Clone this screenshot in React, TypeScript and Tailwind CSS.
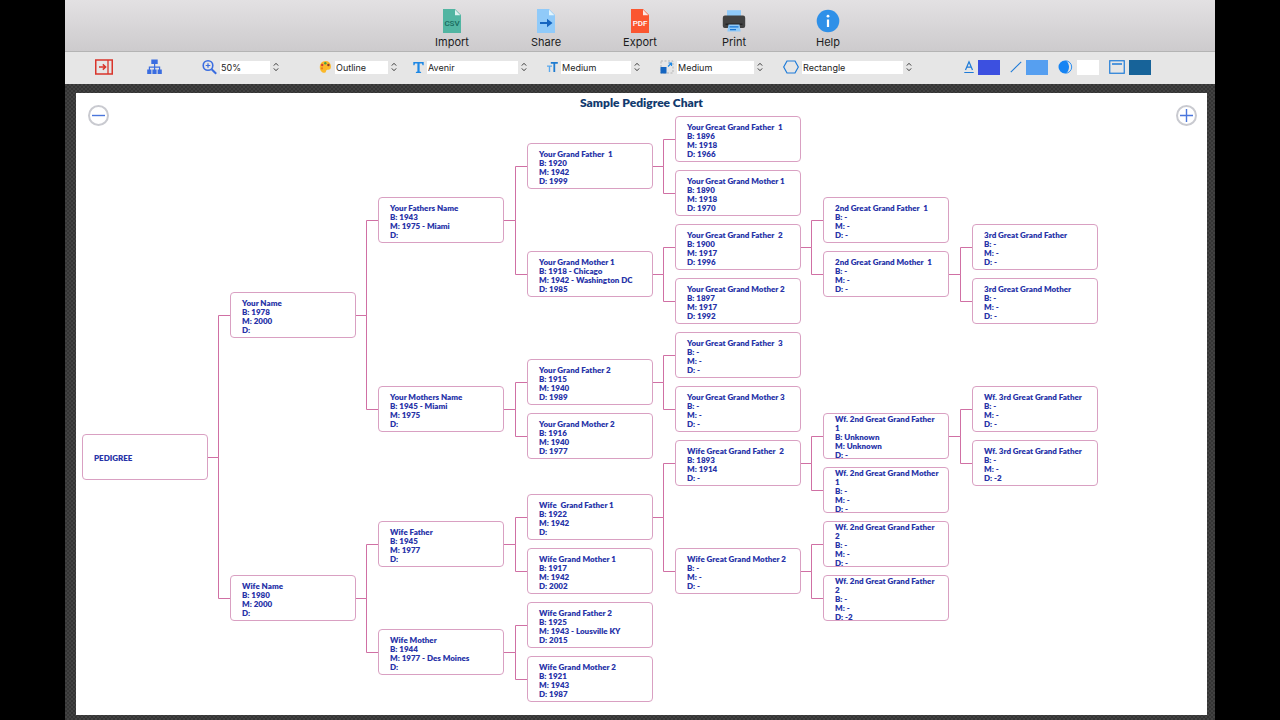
import { useState, type ReactNode } from "react";

// ---------- chart data ----------

type Person = {
  id: string;
  parent?: string;
  col: number;
  top: number;
  lines: string[];
};

// left edge of each generation on the sheet
const COLS = [6, 154, 302, 451, 599, 747, 896];
const NODE_W = 126;

const PEOPLE: Person[] = [
  { id: "root", col: 0, top: 341, lines: ["PEDIGREE"] },

  { id: "y", parent: "root", col: 1, top: 199, lines: ["Your Name", "B: 1978", "M: 2000", "D:"] },
  { id: "w", parent: "root", col: 1, top: 482, lines: ["Wife Name", "B: 1980", "M: 2000", "D:"] },

  { id: "yf", parent: "y", col: 2, top: 104, lines: ["Your Fathers Name", "B: 1943", "M: 1975 - Miami", "D:"] },
  { id: "ym", parent: "y", col: 2, top: 293, lines: ["Your Mothers Name", "B: 1945 - Miami", "M: 1975", "D:"] },
  { id: "wf", parent: "w", col: 2, top: 428, lines: ["Wife Father", "B: 1945", "M: 1977", "D:"] },
  { id: "wm", parent: "w", col: 2, top: 536, lines: ["Wife Mother", "B: 1944", "M: 1977 - Des Moines", "D:"] },

  { id: "gf1", parent: "yf", col: 3, top: 50, lines: ["Your Grand Father  1", "B: 1920", "M: 1942", "D: 1999"] },
  { id: "gm1", parent: "yf", col: 3, top: 158, lines: ["Your Grand Mother 1", "B: 1918 - Chicago", "M: 1942 - Washington DC", "D: 1985"] },
  { id: "gf2", parent: "ym", col: 3, top: 266, lines: ["Your Grand Father 2", "B: 1915", "M: 1940", "D: 1989"] },
  { id: "gm2", parent: "ym", col: 3, top: 320, lines: ["Your Grand Mother 2", "B: 1916", "M: 1940", "D: 1977"] },
  { id: "wgf1", parent: "wf", col: 3, top: 401, lines: ["Wife  Grand Father 1", "B: 1922", "M: 1942", "D:"] },
  { id: "wgm1", parent: "wf", col: 3, top: 455, lines: ["Wife Grand Mother 1", "B: 1917", "M: 1942", "D: 2002"] },
  { id: "wgf2", parent: "wm", col: 3, top: 509, lines: ["Wife Grand Father 2", "B: 1925", "M: 1943 - Lousville KY", "D: 2015"] },
  { id: "wgm2", parent: "wm", col: 3, top: 563, lines: ["Wife Grand Mother 2", "B: 1921", "M: 1943", "D: 1987"] },

  { id: "ggf1", parent: "gf1", col: 4, top: 23, lines: ["Your Great Grand Father  1", "B: 1896", "M: 1918", "D: 1966"] },
  { id: "ggm1", parent: "gf1", col: 4, top: 77, lines: ["Your Great Grand Mother 1", "B: 1890", "M: 1918", "D: 1970"] },
  { id: "ggf2", parent: "gm1", col: 4, top: 131, lines: ["Your Great Grand Father  2", "B: 1900", "M: 1917", "D: 1996"] },
  { id: "ggm2", parent: "gm1", col: 4, top: 185, lines: ["Your Great Grand Mother 2", "B: 1897", "M: 1917", "D: 1992"] },
  { id: "ggf3", parent: "gf2", col: 4, top: 239, lines: ["Your Great Grand Father  3", "B: -", "M: -", "D: -"] },
  { id: "ggm3", parent: "gf2", col: 4, top: 293, lines: ["Your Great Grand Mother 3", "B: -", "M: -", "D: -"] },
  { id: "wggf", parent: "wgf1", col: 4, top: 347, lines: ["Wife Great Grand Father  2", "B: 1893", "M: 1914", "D: -"] },
  { id: "wggm", parent: "wgf1", col: 4, top: 455, lines: ["Wife Great Grand Mother 2", "B: -", "M: -", "D: -"] },

  { id: "2f1", parent: "ggf2", col: 5, top: 104, lines: ["2nd Great Grand Father  1", "B: -", "M: -", "D: -"] },
  { id: "2m1", parent: "ggf2", col: 5, top: 158, lines: ["2nd Great Grand Mother  1", "B: -", "M: -", "D: -"] },
  { id: "w2f1", parent: "wggf", col: 5, top: 320, lines: ["Wf. 2nd Great Grand Father", "1", "B: Unknown", "M: Unknown", "D: -"] },
  { id: "w2m1", parent: "wggf", col: 5, top: 374, lines: ["Wf. 2nd Great Grand Mother", "1", "B: -", "M: -", "D: -"] },
  { id: "w2f2", parent: "wggm", col: 5, top: 428, lines: ["Wf. 2nd Great Grand Father", "2", "B: -", "M: -", "D: -"] },
  { id: "w2m2", parent: "wggm", col: 5, top: 482, lines: ["Wf. 2nd Great Grand Father", "2", "B: -", "M: -", "D: -2"] },

  { id: "3f", parent: "2m1", col: 6, top: 131, lines: ["3rd Great Grand Father", "B: -", "M: -", "D: -"] },
  { id: "3m", parent: "2m1", col: 6, top: 185, lines: ["3rd Great Grand Mother", "B: -", "M: -", "D: -"] },
  { id: "w3f", parent: "w2f1", col: 6, top: 293, lines: ["Wf. 3rd Great Grand Father", "B: -", "M: -", "D: -"] },
  { id: "w3m", parent: "w2f1", col: 6, top: 347, lines: ["Wf. 3rd Great Grand Father", "B: -", "M: -", "D: -2"] },
];

const BY_ID = new Map(PEOPLE.map((p) => [p.id, p]));

// elbow from the parent's right edge to the child's left edge
function elbow(child: Person, parent: Person) {
  const x1 = COLS[parent.col] + NODE_W;
  const x2 = COLS[child.col];
  return `M${x1} ${parent.top + 23.5}H${x2 - 11.5}V${child.top + 23.5}H${x2}`;
}

// ---------- icons ----------

function FileIcon({ fill, fold, children }: { fill: string; fold: string; children: ReactNode }) {
  return (
    <svg width="20" height="24" viewBox="0 0 20 24">
      <path d="M1 0h12l6 6v18H1z" fill={fill} />
      <path d="M13 0.8v5.4h5.4z" fill={fold} />
      {children}
    </svg>
  );
}

function FileTag({ text, fill }: { text: string; fill: string }) {
  return (
    <text x="10" y="17" textAnchor="middle" fontSize="8" fontWeight="500" fill={fill} fontFamily="Roboto, sans-serif">
      {text}
    </text>
  );
}

const csvIcon = (
  <FileIcon fill="#52b5a2" fold="#e0f2f1">
    <FileTag text="CSV" fill="#18695d" />
  </FileIcon>
);

const shareIcon = (
  <FileIcon fill="#90caf9" fold="#e1f5fe">
    <path d="M4 13h7V9.800l5.500 4.200-5.500 4.200V15H4z" fill="#1565c0" />
  </FileIcon>
);

const pdfIcon = (
  <FileIcon fill="#fb5630" fold="#fbe9e7">
    <FileTag text="PDF" fill="#ffffff" />
  </FileIcon>
);

const printIcon = (
  <svg width="24" height="24" viewBox="0 0 24 24">
    <rect x="5" y="1.200" width="14" height="6" fill="#90caf9" />
    <path d="M3 6.500h18a2.200 2.200 0 0 1 2.200 2.200V17a2 2 0 0 1-2 2H2.800a2 2 0 0 1-2-2V8.700A2.200 2.200 0 0 1 3 6.500z" fill="#424242" />
    <path d="M3.500 14.500h17V16h-17z" fill="#242424" />
    <path d="M6.500 15.500h11l1.200 7H5.300z" fill="#90caf9" />
    <path d="M7.500 17.300h9v1.200h-9zM8 20h6v1.200H8z" fill="#1976d2" />
  </svg>
);

const helpIcon = (
  <svg width="24" height="24" viewBox="0 0 24 24">
    <circle cx="12" cy="12" r="11.300" fill="#2f90e8" />
    <rect x="10.900" y="10.500" width="2.200" height="7.500" fill="#fff" />
    <circle cx="12" cy="7.200" r="1.400" fill="#fff" />
  </svg>
);

function PanelIcon() {
  return (
    <svg width="18" height="16" viewBox="0 0 18 16" fill="none" stroke="#d9352b">
      <rect x="0.750" y="1" width="16.500" height="14" strokeWidth="1.500" />
      <path d="M13 1v14" strokeWidth="1.300" />
      <path d="M4 8h6M7.800 5.400L10.600 8l-2.800 2.600" strokeWidth="1.500" />
    </svg>
  );
}

function TreeIcon() {
  return (
    <svg width="15" height="16" viewBox="0 0 15 16" fill="#3a6de0">
      <rect x="4.300" y="0.500" width="6.400" height="4.500" />
      <path d="M7 5h1.200v2.500h5V11h-1.200V8.700H8.200V11H7V8.700H3V11H1.800V7.500H7z" />
      <rect x="0.200" y="10.500" width="4.200" height="4.500" />
      <rect x="5.400" y="10.500" width="4.200" height="4.500" />
      <rect x="10.600" y="10.500" width="4.200" height="4.500" />
    </svg>
  );
}

const zoomIcon = (
  <svg width="15" height="16" viewBox="0 0 15 16" fill="none" stroke="#3a6de0">
    <circle cx="6" cy="6.500" r="4.800" strokeWidth="1.600" />
    <path d="M9.600 10.200l4.600 4.600" strokeWidth="2" />
    <path d="M6 4.200v4.600M3.700 6.500h4.600" strokeWidth="1.200" />
  </svg>
);

const paletteIcon = (
  <svg width="13" height="14" viewBox="0 0 13 14">
    <path d="M6.500 1C3 1 .8 3.800.8 7.200c0 3.300 2.200 5.600 4.600 5.600 1.800 0 1.300-1.600 2-2.600.8-1.100 2.600-.2 3.900-1.300C12.600 7.800 12.400 1 6.500 1z" fill="#fbb829" />
    <circle cx="3.200" cy="5" r="1.200" fill="#d23c3c" />
    <circle cx="6.300" cy="3.200" r="1.200" fill="#43a047" />
    <circle cx="9.400" cy="5" r="1.200" fill="#8e3a30" />
    <circle cx="3" cy="8.400" r="1.100" fill="#e67e22" />
  </svg>
);

const fontIcon = (
  <svg width="11" height="13" viewBox="0 0 11 13" fill="#1e88e5">
    <path d="M.3 1h10.400v3.200H9.500L9 2.600H6.600v8l1.500.4v1H2.900v-1l1.500-.4v-8H2L1.500 4.200H.3z" />
  </svg>
);

const fontSizeIcon = (
  <svg width="11" height="12" viewBox="0 0 11 12">
    <path d="M3.800 1h7v1.700H8.200V11H6.400V2.700H3.800z" fill="#1e7bd0" />
    <path d="M0 4.500h5v1.300H3.200V11H1.800V5.800H0z" fill="#5aa9ee" />
  </svg>
);

const scaleIcon = (
  <svg width="14" height="14" viewBox="0 0 14 14">
    <rect x="1" y="1" width="12" height="12" fill="none" stroke="#b5b5b5" strokeDasharray="2 1.500" />
    <rect x="0.500" y="7" width="6" height="6.500" fill="#1565c0" />
    <path d="M8 6.500l3-3M8.500 3H11.500v3" fill="none" stroke="#1e88e5" strokeWidth="1.200" />
  </svg>
);

const shapeIcon = (
  <svg width="16" height="14" viewBox="0 0 16 14" fill="none" stroke="#1e7bd8" strokeWidth="1.200">
    <path d="M4 1h8l3.300 6L12 13H4L.7 7z" />
  </svg>
);

const textColorIcon = (
  <svg width="10" height="14" viewBox="0 0 10 14" fill="none" stroke="#1e7bd8" strokeWidth="1.200">
    <path d="M1.500 10L5 1.800 8.500 10M2.800 7.200h4.400M.3 12.500h9.400" />
  </svg>
);

const lineColorIcon = (
  <svg width="12" height="12" viewBox="0 0 12 12" stroke="#1e7bd8" strokeWidth="1.100">
    <path d="M.8 11.200L11.200.8" />
  </svg>
);

const fillIcon = (
  <svg width="15" height="14" viewBox="0 0 15 14">
    <path d="M7 .5a6.500 6.500 0 0 0 0 13c1.500 0 4-2.800 4-6.500S8.500.5 7 .5z" fill="#1684f3" />
    <path d="M7.500.8a6.200 6.200 0 0 1 0 12.400" fill="none" stroke="#1684f3" strokeWidth="0.900" />
  </svg>
);

const windowIcon = (
  <svg width="16" height="14" viewBox="0 0 16 14" fill="none" stroke="#1e7bd8">
    <rect x="0.750" y="0.750" width="14.500" height="12.500" strokeWidth="1.200" />
    <path d="M3 4h10" strokeWidth="1.500" />
  </svg>
);

function Stepper() {
  return (
    <svg className="ml-[3px]" width="6" height="10" viewBox="0 0 6 10" fill="none" stroke="#3c3c3c" strokeWidth="1">
      <path d="M.8 3.600L3 1.300l2.200 2.300M.8 6.400L3 8.700l2.200-2.300" />
    </svg>
  );
}

// ---------- toolbar parts ----------

function ActionButton({ icon, label }: { icon: ReactNode; label: string }) {
  return (
    <button type="button" className="flex w-20 flex-col items-center gap-px text-[11px] leading-4 text-[#1c1c1c]">
      {icon}
      {label}
    </button>
  );
}

function Picker({
  label,
  icon,
  options,
  width,
}: {
  label: string;
  icon: ReactNode;
  options: string[];
  width: string;
}) {
  const [value, setValue] = useState(options[0]);
  return (
    <label className="flex items-center">
      {icon}
      <select
        aria-label={label}
        value={value}
        onChange={(e) => setValue(e.target.value)}
        className={`${width} ml-[3px] h-[13px] appearance-none bg-white px-px text-[9px] leading-[13px] text-[#222] outline-none`}
      >
        {options.map((o) => (
          <option key={o}>{o}</option>
        ))}
      </select>
      <Stepper />
    </label>
  );
}

function Swatch({ label, icon, color }: { label: string; icon: ReactNode; color: string }) {
  return (
    <label className="flex items-center gap-1">
      {icon}
      <input
        type="color"
        aria-label={label}
        defaultValue={color}
        className="h-[15px] w-[22px] appearance-none border-0 bg-transparent p-0 [&::-webkit-color-swatch-wrapper]:p-0 [&::-webkit-color-swatch]:rounded-none [&::-webkit-color-swatch]:border-0"
      />
    </label>
  );
}

function ZoomButton({ label, d, side }: { label: string; d: string; side: string }) {
  return (
    <button
      type="button"
      aria-label={label}
      className={`${side} absolute top-3 flex size-[21px] items-center justify-center rounded-full border-2 border-[#c9cad0] bg-white`}
    >
      <svg width="15" height="15" viewBox="0 0 15 15" stroke="#4a76dc" strokeWidth="1.400">
        <path d={d} />
      </svg>
    </button>
  );
}

function PersonCard({ person }: { person: Person }) {
  return (
    <div
      className="absolute flex h-[46px] w-[126px] flex-col justify-center rounded-[4px] border border-[#d9a0c2] bg-white pt-[3px] pl-[11px] text-[8px] leading-[9px] font-extrabold whitespace-pre text-[#2733a8]"
      style={{ left: COLS[person.col], top: person.top }}
    >
      {person.lines.map((line, i) => (
        <p key={i}>{line}</p>
      ))}
    </div>
  );
}

export default function App() {
  return (
    <div className="flex min-h-screen bg-black px-[65px] font-[Inter,'Liberation_Sans',sans-serif]">
      <div className="flex min-w-0 flex-1 flex-col">
        <header className="flex h-[52px] justify-center gap-[14px] border-b border-[#b4b4b4] bg-linear-to-b from-[#e3e1e3] to-[#cdcbcd] pt-[9px]">
          <ActionButton icon={csvIcon} label="Import" />
          <ActionButton icon={shareIcon} label="Share" />
          <ActionButton icon={pdfIcon} label="Export" />
          <ActionButton icon={printIcon} label="Print" />
          <ActionButton icon={helpIcon} label="Help" />
        </header>

        <div className="flex h-8 items-center bg-[#e6e6e6] pr-16 pb-[2px] pl-[30px]">
          <button type="button" aria-label="Toggle panel">
            <PanelIcon />
          </button>
          <button type="button" aria-label="Tree layout" className="mr-10 ml-[34px]">
            <TreeIcon />
          </button>
          <Picker label="Zoom" icon={zoomIcon} options={["50%", "75%", "100%"]} width="w-[50px]" />
          <div className="ml-10 flex items-center gap-4">
            <Picker label="Theme" icon={paletteIcon} options={["Outline", "Filled"]} width="w-[53px]" />
            <Picker label="Font" icon={fontIcon} options={["Avenir", "Helvetica"]} width="w-[91px]" />
          </div>
          <div className="ml-5 flex items-center gap-5">
            <Picker label="Font size" icon={fontSizeIcon} options={["Medium", "Small", "Large"]} width="w-[70px]" />
            <Picker label="Box size" icon={scaleIcon} options={["Medium", "Small", "Large"]} width="w-[77px]" />
            <Picker label="Shape" icon={shapeIcon} options={["Rectangle", "Oval"]} width="w-[101px]" />
          </div>
          <div className="ml-auto flex items-center gap-[10px]">
            <Swatch label="Text color" icon={textColorIcon} color="#3c50e0" />
            <Swatch label="Line color" icon={lineColorIcon} color="#569ff0" />
            <Swatch label="Fill color" icon={fillIcon} color="#ffffff" />
            <Swatch label="Background color" icon={windowIcon} color="#176399" />
          </div>
        </div>

        <main className="flex flex-1 bg-[repeating-conic-gradient(#343434_0_25%,#424242_0_50%)] bg-[length:4px_4px] pt-[9px] pr-2 pb-[5px] pl-[11px]">
          <section className="relative min-h-[622px] flex-1 bg-white font-[Lato,'Open_Sans',sans-serif]">
            <h1 className="text-center text-[12px] leading-5 font-extrabold text-[#123a6e]">Sample Pedigree Chart</h1>
            <svg className="absolute inset-0 size-full" fill="none" stroke="#d070a4" strokeWidth="1">
              {PEOPLE.map((p) => {
                const parent = p.parent ? BY_ID.get(p.parent) : undefined;
                return parent ? <path key={p.id} d={elbow(p, parent)} /> : null;
              })}
            </svg>
            {PEOPLE.map((p) => (
              <PersonCard key={p.id} person={p} />
            ))}
            <ZoomButton label="Zoom out" d="M1 7.500h13" side="left-3" />
            <ZoomButton label="Zoom in" d="M1 7.500h13M7.500 1v13" side="right-[10px]" />
          </section>
        </main>
      </div>
    </div>
  );
}
